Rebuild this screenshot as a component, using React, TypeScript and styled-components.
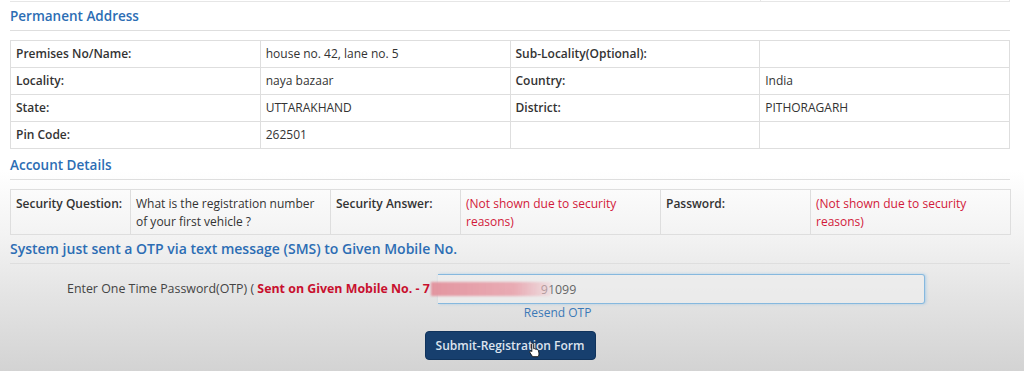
import React from "react";
import styled, { createGlobalStyle } from "styled-components";

const GlobalStyle = createGlobalStyle`
  html, body {
    margin: 0;
    padding: 0;
  }
  body {
    font-family: "Open Sans", "Noto Sans", sans-serif;
    color: #333;
    background: linear-gradient(
      to bottom,
      #ffffff 0,
      #ffffff 170px,
      #f3f3f3 235px,
      #e4e4e4 295px,
      #d3d3d3 371px
    );
    min-height: 371px;
    overflow: hidden;
  }
`;

interface Pair {
  label: string;
  value: string;
}

const addressRows: Pair[][] = [
  [
    { label: "Premises No/Name:", value: "house no. 42, lane no. 5" },
    { label: "Sub-Locality(Optional):", value: "" },
  ],
  [
    { label: "Locality:", value: "naya bazaar" },
    { label: "Country:", value: "India" },
  ],
  [
    { label: "State:", value: "UTTARAKHAND" },
    { label: "District:", value: "PITHORAGARH" },
  ],
  [
    { label: "Pin Code:", value: "262501" },
    { label: "", value: "" },
  ],
];

const hidden = "(Not shown due to security reasons)";

const App: React.FC = () => {
  return (
    <>
      <GlobalStyle />
      <Page>
        <PrevTableEdge>
          <span />
          <span />
        </PrevTableEdge>

        <SectionTitle>Permanent Address</SectionTitle>
        <DetailTable>
          <colgroup>
            <col style={{ width: "25%" }} />
            <col style={{ width: "25%" }} />
            <col style={{ width: "25%" }} />
            <col style={{ width: "25%" }} />
          </colgroup>
          <tbody>
            {addressRows.map((row, i) => (
              <tr key={i}>
                {row.map((cell, j) => (
                  <React.Fragment key={j}>
                    <LabelCell>{cell.label}</LabelCell>
                    <ValueCell>{cell.value}</ValueCell>
                  </React.Fragment>
                ))}
              </tr>
            ))}
          </tbody>
        </DetailTable>

        <SectionTitle $top={6}>Account Details</SectionTitle>
        <DetailTable>
          <colgroup>
            <col style={{ width: "120px" }} />
            <col style={{ width: "200px" }} />
            <col style={{ width: "130px" }} />
            <col style={{ width: "200px" }} />
            <col style={{ width: "150px" }} />
            <col style={{ width: "200px" }} />
          </colgroup>
          <tbody>
            <tr>
              <LabelCell $tall>Security Question:</LabelCell>
              <ValueCell $tall>
                What is the registration number of your first vehicle ?
              </ValueCell>
              <LabelCell $tall>Security Answer:</LabelCell>
              <ValueCell $tall $warn>
                {hidden}
              </ValueCell>
              <LabelCell $tall>Password:</LabelCell>
              <ValueCell $tall $warn>
                {hidden}
              </ValueCell>
            </tr>
          </tbody>
        </DetailTable>

        <SectionTitle $top={4} $large>
          System just sent a OTP via text message (SMS) to Given Mobile No.
        </SectionTitle>

        <OtpRow>
          <OtpLabel>
            Enter One Time Password(OTP) ({" "}
            <OtpMobile>Sent on Given Mobile No. - 7</OtpMobile>
          </OtpLabel>
          <OtpField>
            <OtpInput readOnly value="91099" />
            <ResendLink href="#">Resend OTP</ResendLink>
          </OtpField>
          <Redaction />
        </OtpRow>

        <Actions>
          <SubmitButton type="button">
            Submit-Registration Form
            <Cursor viewBox="0 0 14 16" aria-hidden="true">
              <path
                d="M4.5 1.2c.7 0 1.2.5 1.2 1.2v4.3l.4-.1c.6-.1 1.1.2 1.3.6.5-.3 1.2-.1 1.5.4.6-.2 1.2.1 1.4.7l.6 2.6c.3 1.4-.1 2.8-1 3.8H4.6L2 10.8c-.4-.6-.3-1.3.2-1.7.5-.3 1.1-.2 1.4.2l.2.3V2.4c0-.7.1-1.2.7-1.2z"
                fill="#fff"
                stroke="#111"
                strokeWidth="0.9"
                strokeLinejoin="round"
              />
            </Cursor>
          </SubmitButton>
        </Actions>
      </Page>
    </>
  );
};

export default App;

const Page = styled.div`
  width: 1000px;
  padding: 0 14px 0 10px;
`;

const PrevTableEdge = styled.div`
  display: grid;
  grid-template-columns: 750px 250px;
  height: 1px;
  border-bottom: 1px solid #e6e6e6;

  span + span {
    border-left: 1px solid #e6e6e6;
    border-right: 1px solid #e6e6e6;
  }
`;

const SectionTitle = styled.h3<{ $top?: number; $large?: boolean }>`
  margin: 0 0 9px;
  padding: ${(p) => p.$top ?? 4}px 0 4px;
  line-height: 20px;
  font-size: ${(p) => (p.$large ? "14px" : "13.5px")};
  font-weight: 600;
  color: #2c6db4;
  border-bottom: 1px solid #dedede;
`;

const DetailTable = styled.table`
  width: 1000px;
  border-collapse: collapse;
  table-layout: fixed;
  font-size: 12px;
`;

const Cell = styled.td<{ $tall?: boolean }>`
  border: 1px solid #dedede;
  padding: ${(p) => (p.$tall ? "5px 5px 3px" : "0 5px")};
  height: ${(p) => (p.$tall ? "auto" : "26px")};
  line-height: 18px;
  vertical-align: ${(p) => (p.$tall ? "top" : "middle")};
`;

const LabelCell = styled(Cell)`
  font-weight: 600;
  color: #333;
`;

const ValueCell = styled(Cell)<{ $warn?: boolean }>`
  color: ${(p) => (p.$warn ? "#d2193a" : "#333")};
`;

const OtpRow = styled.div`
  position: relative;
  display: flex;
  align-items: flex-start;
  padding: 1px 0 0 57px;
`;

const OtpLabel = styled.span`
  font-size: 12.4px;
  line-height: 30px;
  color: #444;
  white-space: nowrap;
`;

const OtpMobile = styled.b`
  color: #c8102e;
  font-weight: 700;
`;

const OtpField = styled.div`
  display: flex;
  flex-direction: column;
  margin-left: 8px;
`;

const OtpInput = styled.input`
  box-sizing: border-box;
  width: 487px;
  height: 30px;
  padding: 0 0 0 103px;
  font-family: "Open Sans", "Noto Sans", sans-serif;
  font-size: 12.4px;
  color: #666;
  background: rgba(238, 238, 238, 0.7);
  border: 1px solid #86b8de;
  border-left: none;
  border-radius: 0 3px 3px 0;
  box-shadow: 1px 0 3px rgba(102, 175, 233, 0.45);
  outline: none;
`;

const ResendLink = styled.a`
  margin: 1px 0 0 86px;
  font-size: 12px;
  line-height: 16px;
  color: #3b79b7;
  text-decoration: none;
`;

const Redaction = styled.span`
  position: absolute;
  left: 421px;
  top: 9px;
  width: 120px;
  height: 14px;
  background: linear-gradient(
    to right,
    rgba(226, 140, 152, 0.9),
    rgba(232, 160, 170, 0.85) 70%,
    rgba(240, 210, 215, 0.5)
  );
  filter: blur(0.8px);
`;

const Actions = styled.div`
  display: flex;
  justify-content: center;
  padding: 10px 0 0 0;
`;

const SubmitButton = styled.button`
  position: relative;
  width: 171px;
  height: 29px;
  padding: 0;
  font-family: "Open Sans", "Noto Sans", sans-serif;
  font-size: 12px;
  font-weight: 600;
  color: #dde4ee;
  background: #173f6e;
  border: 1px solid #10335c;
  border-radius: 4px;
  cursor: pointer;
`;

const Cursor = styled.svg`
  position: absolute;
  left: 102px;
  top: 10px;
  width: 14px;
  height: 16px;
`;
